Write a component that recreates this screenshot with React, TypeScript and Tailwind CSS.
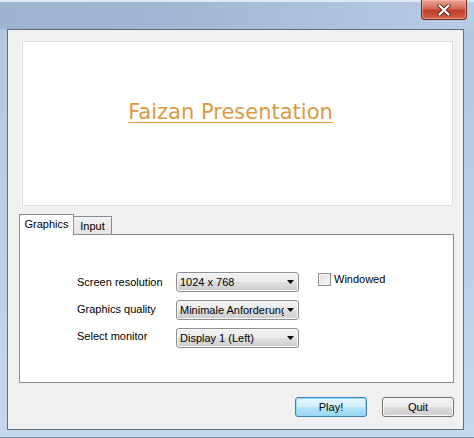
import React from "react";

function Dropdown({ text }: { text: string }) {
  return (
    <div className="flex h-[20px] w-[123px] items-center rounded-[3px] border border-[#8e8f8f] bg-[linear-gradient(to_bottom,#f2f2f2_0%,#ebebeb_50%,#dddddd_51%,#cfcfcf_100%)] shadow-[inset_0_0_0_1px_#f8f8f8]">
      <div className="ml-[3px] min-w-0 flex-1 overflow-hidden whitespace-nowrap text-[11px] leading-[14px] text-black">
        {text}
      </div>
      <svg width="7" height="4" viewBox="0 0 7 4" className="ml-[3px] mr-[4px] shrink-0">
        <path d="M0 0 H7 L3.5 4 Z" fill="#000" />
      </svg>
    </div>
  );
}

export default function App() {
  return (
    <div
      className="relative flex h-[438px] w-[474px] flex-col overflow-hidden bg-[linear-gradient(to_bottom,#b0c7e0,#bbd0e9_60%,#c5d8ed)]"
      style={{ fontFamily: '"Liberation Sans", Arial, sans-serif' }}
    >
      {/* title bar */}
      <div className="h-[29px] w-full shrink-0 border-t-[2px] border-[#dfe9f4] bg-[linear-gradient(to_right,#9bb4d0_0%,#9fb7d2_35%,#a7bed8_55%,#b3c8e0_85%,#b8cce3_100%)]" />
      {/* close button */}
      <div className="absolute right-[7px] top-0 flex h-[20px] w-[46px] items-center justify-center rounded-b-[4px] border border-t-0 border-[#6b2a22] bg-[linear-gradient(to_bottom,#e9a595_0%,#d66a56_45%,#c2402c_55%,#d2604a_100%)] shadow-[inset_0_0_0_1px_rgba(255,200,190,0.5)]">
        <svg width="14" height="12" viewBox="0 0 14 12">
          <path d="M2.5 1.5 L11.5 10.5 M11.5 1.5 L2.5 10.5" stroke="#5b1a12" strokeWidth="4" strokeLinecap="round" />
          <path d="M2.5 1.5 L11.5 10.5 M11.5 1.5 L2.5 10.5" stroke="#ffffff" strokeWidth="2.4" strokeLinecap="round" />
        </svg>
      </div>

      {/* client area */}
      <div className="ml-[7px] mr-[10px] flex h-[401px] flex-col border border-[#5e6f84] bg-[#f0f0f0]">
        {/* white preview box */}
        <div className="ml-[14px] mr-[10px] mt-[11px] flex h-[165px] justify-center border border-[#dcdcdc] bg-white shadow-[0_0_0_1px_#f7f7f7]">
          <div
            className="mr-[14px] mt-[57px] text-[21px] leading-[26px] text-[#dc9b41] underline decoration-1 underline-offset-[3px]"
            style={{ fontFamily: '"DejaVu Sans", Verdana, sans-serif' }}
          >
            Faizan Presentation
          </div>
        </div>

        {/* tabs */}
        <div className="ml-[11px] mt-[8px] flex h-[20px] items-end">
          <div className="relative z-10 -mb-px flex h-[21px] w-[55px] items-start justify-center border border-b-0 border-[#898c95] bg-white pt-[3px] text-[11px] leading-[13px] text-black">
            Graphics
          </div>
          <div className="flex h-[18px] w-[38px] items-start justify-center border border-b-0 border-l-0 border-[#898c95] bg-[linear-gradient(to_bottom,#f3f3f3,#e3e3e3)] pt-[3px] text-[11px] leading-[13px] text-black">
            Input
          </div>
        </div>

        {/* tab panel */}
        <div className="ml-[11px] mr-[9px] h-[149px] border border-[#898c95] bg-white pl-[57px] pt-[37px]">
          <div className="flex flex-col gap-[8px]">
            <div className="flex h-[20px] items-center">
              <div className="w-[99px] text-[11px] text-black">Screen resolution</div>
              <Dropdown text="1024 x 768" />
              <div className="ml-[19px] flex items-center self-start pt-[1px]">
                <div className="h-[13px] w-[13px] border border-[#8e8f8f] bg-[linear-gradient(135deg,#dcdcdc,#fbfbfb)] shadow-[inset_0_0_0_1px_#f4f4f4]" />
                <div className="ml-[3px] text-[11px] leading-[13px] text-black">Windowed</div>
              </div>
            </div>
            <div className="flex h-[20px] items-center">
              <div className="-mt-[2px] w-[99px] text-[11px] text-black">Graphics quality</div>
              <Dropdown text="Minimale Anforderungen" />
            </div>
            <div className="flex h-[20px] items-center">
              <div className="-mt-[3px] w-[99px] text-[11px] text-black">Select monitor</div>
              <Dropdown text="Display 1 (Left)" />
            </div>
          </div>
        </div>

        {/* buttons */}
        <div className="mr-[9px] mt-[14px] flex justify-end gap-[15px]">
          <div className="flex h-[20px] w-[72px] items-center justify-center rounded-[3px] border border-[#3c7fb1] bg-[linear-gradient(to_bottom,#e5f5fd_0%,#d3effc_50%,#b5e2fa_51%,#9dd6f4_100%)] text-[11px] text-black shadow-[inset_0_0_0_1px_#8fdcfa]">
            Play!
          </div>
          <div className="flex h-[20px] w-[72px] items-center justify-center rounded-[3px] border border-[#707070] bg-[linear-gradient(to_bottom,#f2f2f2_0%,#ebebeb_50%,#dddddd_51%,#cfcfcf_100%)] text-[11px] text-black shadow-[inset_0_0_0_1px_#fcfcfc]">
            Quit
          </div>
        </div>
      </div>
      <div className="flex-1 border-b border-[#7d90a8]" />
    </div>
  );
}
